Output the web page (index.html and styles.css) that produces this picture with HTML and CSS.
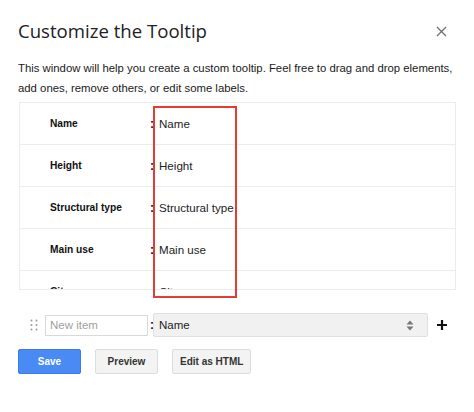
FILE: index.html
```html
<!DOCTYPE html>
<html lang="en">
<head>
    <meta charset="UTF-8">
    <meta name="viewport" content="width=device-width, initial-scale=1.0">
    <title>Customize the Tooltip</title>
    <link rel="stylesheet" href="styles.css">
</head>
<body>
    <div class="dialog">
        <!-- Header -->
        <div class="dialog-header">
            <h1 class="dialog-title">Customize the Tooltip</h1>
            <span class="close-btn">
                <svg width="11" height="11" viewBox="0 0 11 11">
                    <path d="M1 1 L10 10 M10 1 L1 10" stroke="#6f6f6f" stroke-width="1.3" fill="none"/>
                </svg>
            </span>
        </div>

        <p class="intro">This window will help you create a custom tooltip. Feel free to drag and drop elements, add ones, remove others, or edit some labels.</p>

        <!-- Tooltip fields -->
        <div class="fields-wrap">
            <div class="fields">
                <div class="field-row">
                    <span class="field-label">Name</span>
                    <span class="field-colon">:</span>
                    <span class="field-value">Name</span>
                </div>
                <div class="field-row">
                    <span class="field-label">Height</span>
                    <span class="field-colon">:</span>
                    <span class="field-value">Height</span>
                </div>
                <div class="field-row">
                    <span class="field-label">Structural type</span>
                    <span class="field-colon">:</span>
                    <span class="field-value">Structural type</span>
                </div>
                <div class="field-row">
                    <span class="field-label">Main use</span>
                    <span class="field-colon">:</span>
                    <span class="field-value">Main use</span>
                </div>
                <div class="field-row">
                    <span class="field-label">City</span>
                    <span class="field-colon">:</span>
                    <span class="field-value">City</span>
                </div>
            </div>
            <div class="highlight"></div>
        </div>

        <!-- New item row -->
        <div class="new-row">
            <span class="drag-handle">
                <svg width="8" height="12" viewBox="0 0 8 12">
                    <circle cx="1.5" cy="1.5" r="1" fill="#9a9a9a"/>
                    <circle cx="6.5" cy="1.5" r="1" fill="#9a9a9a"/>
                    <circle cx="1.5" cy="6" r="1" fill="#9a9a9a"/>
                    <circle cx="6.5" cy="6" r="1" fill="#9a9a9a"/>
                    <circle cx="1.5" cy="10.5" r="1" fill="#9a9a9a"/>
                    <circle cx="6.5" cy="10.5" r="1" fill="#9a9a9a"/>
                </svg>
            </span>
            <input type="text" class="new-input" placeholder="New item">
            <span class="field-colon">:</span>
            <div class="column-select">
                <span>Name</span>
                <svg width="8" height="11" viewBox="0 0 8 11">
                    <path d="M0.5 4.5 L4 0.5 L7.5 4.5 Z M0.5 6.5 L4 10.5 L7.5 6.5 Z" fill="#777"/>
                </svg>
            </div>
            <span class="add-btn">
                <svg width="10" height="10" viewBox="0 0 10 10">
                    <path d="M5 0 V10 M0 5 H10" stroke="#111" stroke-width="2.2"/>
                </svg>
            </span>
        </div>

        <!-- Actions -->
        <div class="actions">
            <button class="btn btn-primary">Save</button>
            <button class="btn">Preview</button>
            <button class="btn">Edit as HTML</button>
        </div>
    </div>
</body>
</html>
```

FILE: styles.css
```css
body {
    margin: 0;
    background-color: #fff;
    font-family: "Liberation Sans", Arial, sans-serif;
    color: #222;
}

.dialog {
    padding: 0 18px;
}

/* Header */
.dialog-header {
    display: flex;
    justify-content: space-between;
    align-items: center;
    padding-top: 19px;
}

.dialog-title {
    margin: 0;
    font-family: "Open Sans", Roboto, sans-serif;
    font-size: 18.6px;
    font-weight: 400;
    line-height: 24px;
    color: #202124;
}

.close-btn {
    display: flex;
    margin-right: 9px;
}

.intro {
    margin: 15px -4px 4px 0;
    font-size: 11.35px;
    line-height: 20px;
    color: #1a1a1a;
}

/* Fields list */
.fields-wrap {
    position: relative;
    margin-left: 1px;
}

.fields {
    height: 186px;
    overflow: hidden;
    border: 1px solid #ececec;
}

.field-row {
    display: flex;
    align-items: center;
    height: 41px;
    border-bottom: 1px solid #ececec;
}

.field-label {
    width: 100px;
    padding-left: 30px;
    font-size: 10.2px;
    font-weight: bold;
    color: #111;
}

.field-colon {
    width: 5px;
    font-size: 12px;
    font-weight: bold;
    color: #111;
}

.field-value {
    padding-left: 4px;
    font-size: 11.6px;
    color: #222;
}

.highlight {
    position: absolute;
    left: 134px;
    top: 4px;
    width: 80px;
    height: 188px;
    border: 2px solid #e53b32;
}

/* New item row */
.new-row {
    display: flex;
    align-items: center;
    margin-top: 23px;
    height: 24px;
}

.drag-handle {
    display: flex;
    margin-left: 12px;
    width: 15px;
}

.new-input {
    box-sizing: border-box;
    width: 103px;
    height: 21px;
    margin-right: 2px;
    padding: 0 4px;
    border: 1px solid #d9d9d9;
    font-family: "Liberation Sans", Arial, sans-serif;
    font-size: 11.5px;
    outline: none;
}

.new-input::placeholder {
    color: #a0a0a0;
}

.new-row .field-colon {
    width: 3px;
}

.column-select {
    box-sizing: border-box;
    display: flex;
    justify-content: space-between;
    align-items: center;
    width: 275px;
    height: 24px;
    padding: 0 13px 0 5px;
    background-color: #f1f1f1;
    border: 1px solid #e0e0e0;
    border-radius: 2px;
    font-size: 11.5px;
    color: #222;
}

.add-btn {
    display: flex;
    margin-left: 9px;
}

/* Buttons */
.actions {
    display: flex;
    gap: 14px;
    margin-top: 12px;
}

.btn {
    box-sizing: border-box;
    min-width: 63px;
    height: 25px;
    padding: 0 7px;
    background-color: #f3f3f3;
    border: 1px solid #dcdcdc;
    border-radius: 2px;
    font-family: "Liberation Sans", Arial, sans-serif;
    font-size: 10px;
    font-weight: bold;
    color: #333;
}

.btn-primary {
    background-color: #4a8af4;
    border-color: #3b7be9;
    color: #fff;
}
```
